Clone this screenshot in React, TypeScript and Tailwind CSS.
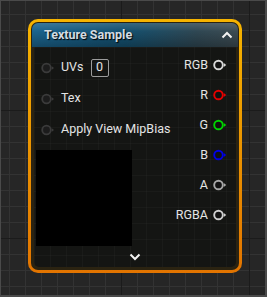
import React from "react";

const font = { fontFamily: "Roboto, 'Noto Sans', sans-serif" };

function LeftPin() {
  return (
    <svg width="14" height="12" viewBox="0 0 14 12" className="shrink-0">
      <circle cx="5.5" cy="6" r="4.3" fill="#1c1c1c" stroke="#3b3b3b" strokeWidth="1.8" />
      <path d="M10.8 4.2 L13 6 L10.8 7.8 Z" fill="#3b3b3b" />
    </svg>
  );
}

function RightPin({ color }: { color: string }) {
  return (
    <svg width="14" height="12" viewBox="0 0 14 12" className="shrink-0">
      <circle cx="5.5" cy="6" r="4.3" fill="#111" stroke={color} strokeWidth="1.9" />
      <path d="M10.8 4 L13.2 6 L10.8 8 Z" fill={color} />
    </svg>
  );
}

const outputs: { label: string; color: string }[] = [
  { label: "RGB", color: "#d9d9d9" },
  { label: "R", color: "#e60000" },
  { label: "G", color: "#00d400" },
  { label: "B", color: "#0000e6" },
  { label: "A", color: "#a8a8a8" },
  { label: "RGBA", color: "#d0d0d0" },
];

export default function App() {
  return (
    <div
      className="w-[267px] h-[297px] box-border border-t border-l border-r-2 border-b-2 border-[#4a4a4a] bg-[#262626] bg-[linear-gradient(to_right,#1b1b1b_1px,transparent_1px),linear-gradient(to_bottom,#1b1b1b_1px,transparent_1px),linear-gradient(to_right,#333333_1px,transparent_1px),linear-gradient(to_bottom,#333333_1px,transparent_1px)] bg-[size:128px_128px,128px_128px,16px_16px,16px_16px] bg-[position:120px_109px,120px_109px,8px_13px,8px_13px] pl-[27px] pt-[18px]"
      style={font}
    >
      <div className="w-[214px] h-[254px] rounded-[10px] p-[3px] bg-[linear-gradient(to_bottom,#f6b400,#eb9400_50%,#e27400)]">
        <div className="h-full rounded-[7px] bg-[#2b2311] p-px flex flex-col">
          <div className="h-[24px] shrink-0 rounded-t-[6px] flex items-center justify-between pl-[12px] pr-[5px] bg-[linear-gradient(to_bottom,rgba(255,255,255,0.14),rgba(255,255,255,0)_35%,rgba(0,0,0,0.28)),linear-gradient(to_right,#1b648e,#14506f_45%,#2f4753_80%,#3c4b52)]">
            <span className="text-[12.5px] font-bold text-[#d3dce2] leading-none [text-shadow:1px_1px_1px_#000]">
              Texture Sample
            </span>
            <svg width="12" height="8" viewBox="0 0 12 8">
              <path d="M1.5 6.5 L6 2 L10.5 6.5" fill="none" stroke="#f2f2f2" strokeWidth="2" />
            </svg>
          </div>
          <div className="flex-1 mx-[2px] mb-[2px] rounded-b-[5px] bg-[#141513] bg-[linear-gradient(to_right,rgba(255,255,255,0.025)_1px,transparent_1px),linear-gradient(to_bottom,rgba(255,255,255,0.025)_1px,transparent_1px)] bg-[size:16px_16px] flex flex-col">
            <div className="flex flex-1">
              <div className="flex-1 flex flex-col pt-[5px]">
                <div className="h-[31px] flex items-center pl-[7px] gap-[6px]">
                  <LeftPin />
                  <span className="text-[12.5px] text-[#e4e4e4] leading-none">UVs</span>
                  <div className="ml-[1px] w-[18px] h-[18px] border border-[#9c9c9c] rounded-[2px] flex items-center justify-center text-[12.5px] text-[#e4e4e4] leading-none">
                    0
                  </div>
                </div>
                <div className="h-[31px] flex items-center pl-[7px] gap-[6px]">
                  <LeftPin />
                  <span className="text-[12.5px] text-[#e4e4e4] leading-none">Tex</span>
                </div>
                <div className="h-[31px] flex items-center pl-[7px] gap-[6px]">
                  <LeftPin />
                  <span className="text-[12.5px] text-[#e4e4e4] leading-none whitespace-nowrap">Apply View MipBias</span>
                </div>
                <div className="mt-[5px] ml-[2px] w-[96px] h-[96px] bg-black" />
              </div>
              <div className="flex flex-col items-end pt-[3px] pr-[9px]">
                {outputs.map((o) => (
                  <div key={o.label} className="h-[30px] flex items-center gap-[5px]">
                    <span className="text-[12.5px] text-[#e4e4e4] leading-none">{o.label}</span>
                    <RightPin color={o.color} />
                  </div>
                ))}
              </div>
            </div>
            <div className="h-[20px] flex items-center justify-center">
              <svg width="12" height="8" viewBox="0 0 12 8">
                <path d="M1.5 1.5 L6 6 L10.5 1.5" fill="none" stroke="#f2f2f2" strokeWidth="2" />
              </svg>
            </div>
          </div>
        </div>
      </div>
    </div>
  );
}
